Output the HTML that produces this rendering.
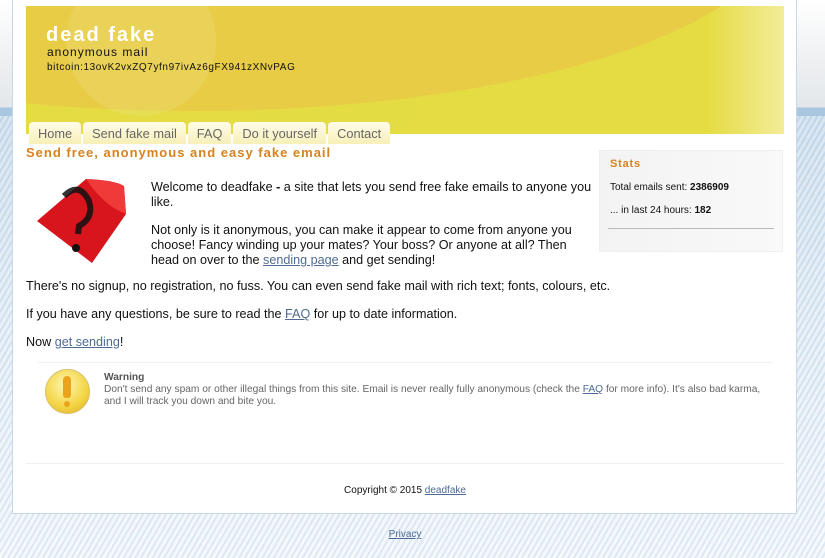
<!DOCTYPE html>
<html><head><meta charset="utf-8"><style>
*{margin:0;padding:0;box-sizing:border-box}
body{width:825px;height:558px;overflow:hidden;font-family:"Liberation Sans",Arial,sans-serif;position:relative;
background:linear-gradient(#fff 0,#eef0f2 60px,#e3e7ea 107px,#a9c6e0 108px,#a9c6e0 116px,transparent 116px),
repeating-linear-gradient(120deg,rgba(180,205,228,.45) 0 2px,rgba(235,242,248,.45) 2px 5px),
linear-gradient(#c9dbea 116px,#e6eef6 300px,#fff 558px);}
.wrap{position:absolute;left:12px;top:-2px;width:785px;height:516px;background:#fff;border:1px solid #c8d8e6;border-top:none}
.hdr{position:absolute;left:26px;top:6px;width:758px;height:128px;overflow:hidden;
background:linear-gradient(90deg,#e4dc42 0,#e5dc44 90%,#f3ec9a 100%)}
.sw{position:absolute;left:-420px;top:-270px;width:1175px;height:375px;border-radius:50%;background:#e8cc46}
.sun{position:absolute;left:40px;top:-40px;width:150px;height:150px;border-radius:50%;background:rgba(255,255,255,.1)}
h1{position:absolute;left:20px;top:18px;color:#fff;font-size:20px;letter-spacing:2px;font-weight:bold}
.sub{position:absolute;left:21px;top:39px;font-size:12px;letter-spacing:1px;color:#111}
.btc{position:absolute;left:21px;top:56px;font-size:10px;letter-spacing:.6px;color:#111}
.tabs{position:absolute;left:29px;top:122px;display:flex;gap:2px}
.tabs div{background:linear-gradient(#fffce8,#f7f0b8);border-radius:4px 4px 0 0;font-size:12.8px;color:#666;height:22px;padding:4px 9px 0}
.ttl{position:absolute;left:26px;top:145px;font-size:13px;font-weight:bold;color:#d7821e;letter-spacing:1px}
.main{position:absolute;left:26px;top:180px;width:620px;font-size:12.6px;color:#111;line-height:15px}
.main p{margin-bottom:13px}
.in{margin-left:125px;width:443px}
a{color:#4d6b93}
.stats{position:absolute;left:599px;top:150px;width:184px;height:102px;background:linear-gradient(90deg,#f3f3f3,#f9f9f9);border:1px solid #efefef}
.stats h3{font-size:11px;color:#d7821e;letter-spacing:.8px;margin:7px 0 0 10px}
.stats p{font-size:10px;color:#111;margin:12px 0 0 10px}
.stats hr{border:none;border-top:1px solid #bbb;margin:12px 8px 0 8px}
.warn{position:absolute;left:38px;top:362px;width:734px;border-top:1px solid #f0f0f0;font-size:10.2px;color:#666;line-height:12px}
</style></head><body>
<div class="wrap"></div>
<div class="hdr"><div class="sw"></div><div class="sun"></div>
<h1>dead fake</h1><div class="sub">anonymous mail</div><div class="btc">bitcoin:13ovK2vxZQ7yfn97ivAz6gFX941zXNvPAG</div>
</div>
<div class="tabs"><div>Home</div><div>Send fake mail</div><div>FAQ</div><div>Do it yourself</div><div>Contact</div></div>
<div class="ttl">Send free, anonymous and easy fake email</div>
<svg style="position:absolute;left:34px;top:176px" width="96" height="96" viewBox="0 0 96 96">
<path d="M3 45 L52 3 Q80 4 90 10 L92 38 L58 87 Z" fill="#d8141c"/>
<path d="M52 3 Q80 4 90 10 L92 38 Q70 30 52 3Z" fill="#f03a3a"/>
<path d="M30 20 Q45 5 55 25 Q60 42 45 50 L44 58" stroke="#111" stroke-width="6" fill="none" opacity=".85"/>
<circle cx="42" cy="72" r="4" fill="#111"/>
</svg>
<div class="main">
<p class="in">Welcome to deadfake <b>-</b> a site that lets you send free fake emails to anyone you like.</p>
<p class="in">Not only is it anonymous, you can make it appear to come from anyone you choose! Fancy winding up your mates? Your boss? Or anyone at all? Then head on over to the <a href="#">sending page</a> and get sending!</p>
<p style="margin-top:-2px">There's no signup, no registration, no fuss. You can even send fake mail with rich text; fonts, colours, etc.</p>
<p>If you have any questions, be sure to read the <a href="#">FAQ</a> for up to date information.</p>
<p>Now <a href="#">get sending</a>!</p>
</div>
<div class="stats"><h3>Stats</h3><p>Total emails sent: <b>2386909</b></p><p>... in last 24 hours: <b>182</b></p><hr></div>
<div class="warn">
<div style="position:absolute;left:7px;top:6px;width:45px;height:45px;border-radius:50%;background:radial-gradient(circle at 45% 35%,#fff6b0,#f3d444 60%,#d8aa20);border:1px solid #d9c070"></div>
<div style="position:absolute;left:25px;top:13px;width:8px;height:22px;background:#e9a41c;border-radius:4px 4px 3px 3px"></div>
<div style="position:absolute;left:26px;top:38px;width:6px;height:6px;background:#e9a41c;border-radius:50%"></div>
<div style="position:absolute;left:66px;top:9px;width:665px"><b style="color:#555">Warning</b><br>Don't send any spam or other illegal things from this site. Email is never really fully anonymous (check the <a href="#">FAQ</a> for more info). It's also bad karma, and I will track you down and bite you.</div>
</div>
<div style="position:absolute;left:26px;top:463px;width:758px;border-top:1px solid #f0f0f0"></div>
<div style="position:absolute;left:0;width:810px;top:485px;text-align:center;font-size:10px;color:#111">Copyright © 2015 <a href="#">deadfake</a></div>
<div style="position:absolute;left:0;width:810px;top:529px;text-align:center;font-size:10px"><a href="#">Privacy</a></div>
</body></html>
